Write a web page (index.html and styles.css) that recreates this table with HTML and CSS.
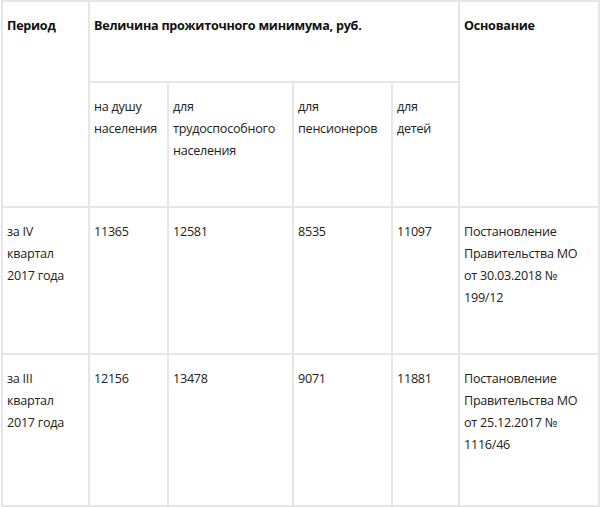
FILE: index.html
```html
<!DOCTYPE html>
<html lang="ru">
<head>
<meta charset="utf-8">
<link rel="stylesheet" href="styles.css">
</head>
<body>
<table class="tbl">
  <colgroup>
    <col class="c1"><col class="c2"><col class="c3"><col class="c4"><col class="c5"><col class="c6">
  </colgroup>
  <thead>
    <tr>
      <th rowspan="2">Период</th>
      <th colspan="4">Величина прожиточного минимума, руб.</th>
      <th rowspan="2">Основание</th>
    </tr>
    <tr>
      <td>на душу населения</td>
      <td>для трудоспособного населения</td>
      <td>для пенсионеров</td>
      <td>для детей</td>
    </tr>
  </thead>
  <tbody>
    <tr>
      <td>за IV квартал 2017 года</td>
      <td>11365</td>
      <td>12581</td>
      <td>8535</td>
      <td>11097</td>
      <td>Постановление Правительства МО от 30.03.2018 № 199/12</td>
    </tr>
    <tr class="last">
      <td>за III квартал 2017 года</td>
      <td>12156</td>
      <td>13478</td>
      <td>9071</td>
      <td>11881</td>
      <td>Постановление Правительства МО от 25.12.2017 № 1116/46</td>
    </tr>
  </tbody>
</table>
</body>
</html>
```
FILE: styles.css
```css
html, body {
  margin: 0;
  padding: 0;
  background: #fff;
}
body {
  font-family: "Open Sans", "Noto Sans", sans-serif;
  font-size: 12.6px;
  letter-spacing: -0.25px;
  line-height: 22px;
  color: #222;
}
.tbl {
  border-collapse: collapse;
  table-layout: fixed;
  width: 598px;
  margin: 0 0 0 1px;
}
.c1 { width: 87px; }
.c2 { width: 79px; }
.c3 { width: 125px; }
.c4 { width: 99px; }
.c5 { width: 67px; }
.c6 { width: 140px; }
.tbl th, .tbl td {
  border: 2px solid #e6e6e6;
  padding: 13px 10px 44px 4px;
  vertical-align: top;
  text-align: left;
}
.tbl th {
  font-weight: 700;
  color: #111;
}
.tbl .last td {
  padding-bottom: 49px;
}
```
